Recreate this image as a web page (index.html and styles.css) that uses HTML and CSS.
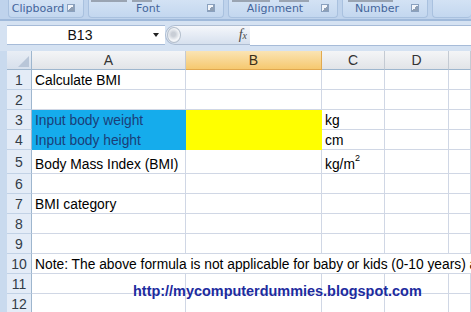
FILE: index.html
```html
<!DOCTYPE html>
<html lang="en">
<head>
    <meta charset="UTF-8">
    <title>Calculate BMI</title>
    <link rel="stylesheet" href="styles.css">
</head>
<body>
    <!-- Ribbon group labels -->
    <div class="ribbon">
        <div class="group g-clip">
            <span class="group-label">Clipboard</span>
            <span class="launcher"></span>
        </div>
        <div class="group g-font">
            <span class="stub s1"></span>
            <span class="stub s2"></span>
            <span class="group-label">Font</span>
            <span class="launcher"></span>
        </div>
        <div class="group g-align">
            <span class="stub s3"></span>
            <span class="stub s4"></span>
            <span class="group-label">Alignment</span>
            <span class="launcher"></span>
        </div>
        <div class="group g-num">
            <span class="stub s5"></span>
            <span class="group-label">Number</span>
            <span class="launcher"></span>
        </div>
        <div class="group g-rest"></div>
    </div>

    <!-- Formula bar -->
    <div class="formula-bar">
        <div class="name-box">
            <span class="name">B13</span>
            <span class="drop"></span>
        </div>
        <div class="fx-area">
            <span class="knob"></span>
            <span class="fx">f<i>x</i></span>
        </div>
        <div class="formula-input"></div>
    </div>

    <!-- Worksheet -->
    <div class="sheet">
        <div class="grid">
            <div class="corner"><span class="tri"></span></div>
            <div class="col-head">A</div>
            <div class="col-head active">B</div>
            <div class="col-head">C</div>
            <div class="col-head">D</div>
            <div class="col-head"></div>

            <div class="row-head">1</div>
            <div class="cell">Calculate BMI</div>
            <div class="cell"></div><div class="cell"></div><div class="cell"></div><div class="cell"></div>

            <div class="row-head">2</div>
            <div class="cell"></div><div class="cell"></div><div class="cell"></div><div class="cell"></div><div class="cell"></div>

            <div class="row-head">3</div>
            <div class="cell input-label">Input body weight</div>
            <div class="cell input-value"></div>
            <div class="cell">kg</div><div class="cell"></div><div class="cell"></div>

            <div class="row-head">4</div>
            <div class="cell input-label">Input body height</div>
            <div class="cell input-value"></div>
            <div class="cell">cm</div><div class="cell"></div><div class="cell"></div>

            <div class="row-head">5</div>
            <div class="cell">Body Mass Index (BMI)</div>
            <div class="cell"></div>
            <div class="cell">kg/m<sup>2</sup></div><div class="cell"></div><div class="cell"></div>

            <div class="row-head">6</div>
            <div class="cell"></div><div class="cell"></div><div class="cell"></div><div class="cell"></div><div class="cell"></div>

            <div class="row-head">7</div>
            <div class="cell">BMI category</div>
            <div class="cell"></div><div class="cell"></div><div class="cell"></div><div class="cell"></div>

            <div class="row-head">8</div>
            <div class="cell"></div><div class="cell"></div><div class="cell"></div><div class="cell"></div><div class="cell"></div>

            <div class="row-head">9</div>
            <div class="cell"></div><div class="cell"></div><div class="cell"></div><div class="cell"></div><div class="cell"></div>

            <div class="row-head">10</div>
            <div class="cell note">Note: The above formula is not applicable for baby or kids (0-10 years) a</div>

            <div class="row-head">11</div>
            <div class="cell"></div><div class="cell"></div><div class="cell"></div><div class="cell"></div><div class="cell"></div>

            <div class="row-head">12</div>
            <div class="cell"></div><div class="cell"></div><div class="cell"></div><div class="cell"></div><div class="cell"></div>
        </div>

        <!-- blog link stamped on the screenshot -->
        <div class="watermark">http://mycomputerdummies.blogspot.com</div>
    </div>
</body>
</html>
```

FILE: styles.css
```css
/* General */
body {
    margin: 0;
    padding: 0;
    width: 471px;
    height: 312px;
    overflow: hidden;
    background-color: #c9daee;
    font-family: "Liberation Sans", Arial, sans-serif;
}

/* Ribbon */
.ribbon {
    display: flex;
    gap: 4px;
    height: 19px;
    padding-left: 8px;
    border-bottom: 2px solid #9fb9da;
    background-color: #bfd3ec;
}

.group {
    position: relative;
    display: flex;
    align-items: flex-end;
    height: 18px;
    padding-bottom: 2px;
    border: 1px solid #a9c1df;
    border-top: none;
    border-radius: 0 0 4px 4px;
    background: linear-gradient(#d3e2f4, #c3d7ef);
    box-sizing: border-box;
}

.g-clip { width: 76px; }
.g-font { width: 136px; }
.g-align { width: 110px; }
.g-num { width: 86px; }
.g-rest { flex: 1; border-right: none; }

/* bottoms of the ribbon buttons, cut by the screenshot */
.stub {
    position: absolute;
    top: 0;
    height: 2px;
    background-color: #9aa4b2;
}

.s1 { left: 2px; width: 36px; }
.s2 { left: 43px; width: 20px; }
.s3 { left: 3px; width: 38px; }
.s4 { left: 50px; width: 30px; }
.s5 { left: 5px; width: 45px; }

.group-label {
    flex: 1;
    text-align: center;
    font-family: "DejaVu Sans", sans-serif;
    font-size: 11px;
    line-height: 13px;
    color: #44659b;
}

.launcher {
    width: 6px;
    height: 6px;
    margin: 0 8px 3px 0;
    border: 1px solid #8aa1bf;
    background: linear-gradient(135deg, #f2f5fa 50%, #8e9fb5 50%);
}

/* Formula bar */
.formula-bar {
    display: flex;
    align-items: center;
    height: 22px;
    padding: 3px 0 5px 7px;
    background-color: #d5e2f2;
}

.name-box {
    display: flex;
    align-items: center;
    width: 158px;
    height: 20px;
    background-color: #ffffff;
    border-top: 1px solid #a6bbd8;
    border-bottom: 1px solid #a6bbd8;
    box-sizing: border-box;
}

.name {
    flex: 1;
    text-align: center;
    font-size: 14px;
    color: #111;
}

.drop {
    width: 0;
    height: 0;
    margin-right: 6px;
    border-left: 3px solid transparent;
    border-right: 3px solid transparent;
    border-top: 4px solid #222;
}

.fx-area {
    display: flex;
    align-items: center;
    justify-content: space-between;
    width: 85px;
    height: 20px;
    border-radius: 10px 0 0 10px;
    background: linear-gradient(#f5f7fb, #d6e0ee);
    border: 1px solid #aebdd2;
    border-right: none;
    box-sizing: border-box;
}

.knob {
    width: 14px;
    height: 16px;
    margin-left: 1px;
    border-radius: 50%;
    border: 1px solid #b4bfcc;
    background: radial-gradient(circle at 45% 45%, #c9ced6 20%, #f4f6f9 60%, #e4e8ee);
    box-sizing: border-box;
}

.fx {
    margin-right: 3px;
    font-family: "Liberation Serif", serif;
    font-style: italic;
    font-size: 14px;
    color: #4a4a4a;
}

.fx i {
    font-size: 10px;
}

.formula-input {
    flex: 1;
    height: 21px;
    background-color: #ffffff;
    border-top: 1px solid #a6bbd8;
    border-bottom: 1px solid #a6bbd8;
    box-sizing: border-box;
}

/* Worksheet */
.sheet {
    position: relative;
    margin-left: 7px;
    background-color: #ffffff;
}

.grid {
    display: grid;
    grid-template-columns: 25px 154px 136px 63px 64px 1fr;
    grid-template-rows: 19px 20px 20px 20px 20px 24px repeat(7, 20px);
    font-size: 13.8px;
}

.corner {
    position: relative;
    background: linear-gradient(#e9eef5, #d7e0ec);
    border-right: 1px solid #9eb6ce;
    border-bottom: 1px solid #9eb6ce;
}

.tri {
    position: absolute;
    right: 2px;
    bottom: 2px;
    width: 0;
    height: 0;
    border-left: 11px solid transparent;
    border-bottom: 11px solid #b9c6d8;
}

.col-head {
    display: flex;
    align-items: center;
    justify-content: center;
    font-size: 14px;
    color: #333;
    background: linear-gradient(#f4f5f7, #e2e4e8);
    border-right: 1px solid #c4cad3;
    border-bottom: 1px solid #9eb6ce;
}

.col-head.active {
    background: linear-gradient(#fae4b4, #f6c96f);
    border-right-color: #e1a94f;
    border-bottom-color: #e1a94f;
    color: #3a2f1a;
}

.row-head {
    display: flex;
    align-items: center;
    justify-content: center;
    font-size: 14px;
    color: #333c47;
    background-color: #e4ecf7;
    border-right: 1px solid #9eb6ce;
    border-bottom: 1px solid #c2d2e6;
}

.cell {
    display: flex;
    align-items: flex-end;
    padding: 0 3px 1px;
    white-space: nowrap;
    overflow: hidden;
    color: #000;
    border-right: 1px solid #d0d7e5;
    border-bottom: 1px solid #d0d7e5;
}

.cell sup {
    font-size: 9px;
    align-self: flex-start;
    margin-top: 3px;
}

.input-label {
    color: #1b3e78;
    background-color: #15acec;
    border-color: #15acec;
}

.input-value {
    background-color: #ffff00;
    border-color: #ffff00;
}

.note {
    grid-column: 2 / -1;
    border-right: none;
}

.watermark {
    position: absolute;
    left: 126px;
    top: 232px;
    font-size: 14.45px;
    font-weight: bold;
    color: #1d2b9e;
}
```
